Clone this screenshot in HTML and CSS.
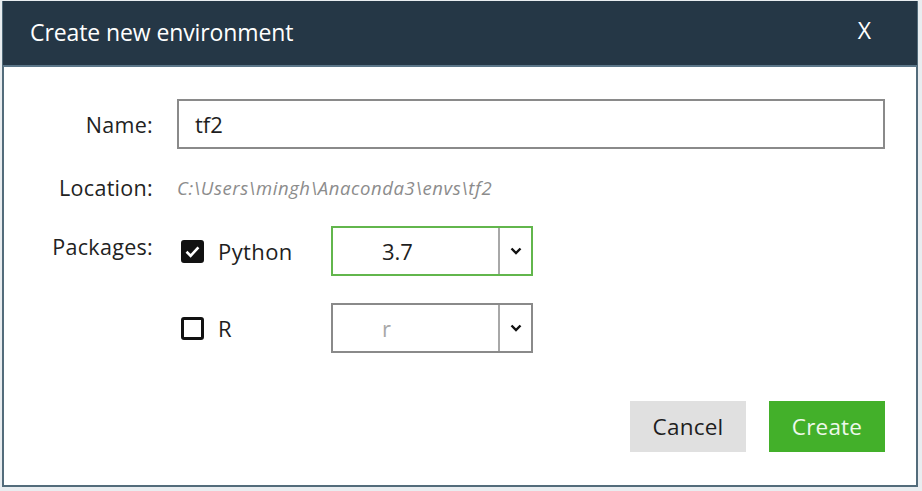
FILE: index.html
```html
<!DOCTYPE html>
<html>
<head>
<meta charset="utf-8">
<link rel="stylesheet" href="styles.css">
</head>
<body>
<div class="dialog">
  <div class="header">
    <span class="title">Create new environment</span>
    <span class="close">X</span>
  </div>
  <div class="body">
    <div class="form">
      <div class="label name-label">Name:</div>
      <div class="input">tf2</div>

      <div class="label loc-label">Location:</div>
      <div class="path">C:\Users\mingh\Anaconda3\envs\tf2</div>

      <div class="label pkg-label">Packages:</div>
      <div class="packages">
        <div class="pkg">
          <span class="check checked">
            <svg width="23" height="23" viewBox="0 0 23 23"><path d="M5.5 11.8 L9.6 15.8 L17.4 7.4" fill="none" stroke="#fff" stroke-width="2.6"/></svg>
          </span>
          <span class="pkg-name">Python</span>
          <div class="select active">
            <span class="value">3.7</span>
            <span class="arrow"><svg width="12" height="8" viewBox="0 0 12 8"><path d="M1.5 1.5 L6 6 L10.5 1.5" fill="none" stroke="#111" stroke-width="2.4"/></svg></span>
          </div>
        </div>
        <div class="pkg">
          <span class="check"></span>
          <span class="pkg-name">R</span>
          <div class="select">
            <span class="value placeholder">r</span>
            <span class="arrow"><svg width="12" height="8" viewBox="0 0 12 8"><path d="M1.5 1.5 L6 6 L10.5 1.5" fill="none" stroke="#111" stroke-width="2.4"/></svg></span>
          </div>
        </div>
      </div>
    </div>
    <div class="buttons">
      <button class="btn cancel">Cancel</button>
      <button class="btn create">Create</button>
    </div>
  </div>
</div>
</body>
</html>
```

FILE: styles.css
```css
html, body {
  margin: 0;
  padding: 0;
}
body {
  background: #e9edf0;
  width: 922px;
  height: 491px;
  overflow: hidden;
  font-family: "Open Sans", "Noto Sans", sans-serif;
  color: #1e1e1e;
}
.dialog {
  margin: 1px 0 0 2px;
  width: 912px;
  height: 484px;
  background: #fff;
  border: 2px solid #536c7b;
  border-top: none;
  display: flex;
  flex-direction: column;
}
.header {
  height: 64px;
  margin: 0 -1px 0 -1px;
  background: #253746;
  border-bottom: 2px solid #5b7689;
  display: flex;
  align-items: center;
  justify-content: space-between;
  padding: 0 46px 0 27px;
  color: #fff;
}
.title {
  font-size: 23px;
  letter-spacing: -0.1px;
  margin-top: -3px;
}
.close {
  font-size: 23px;
  margin-top: -6px;
}
.body {
  flex: 1;
  padding: 32px 31px 0 0;
  display: flex;
  flex-direction: column;
}
.form {
  display: grid;
  grid-template-columns: 149px 1fr;
  column-gap: 24px;
  row-gap: 0;
}
.label {
  text-align: right;
  font-size: 21.5px;
  letter-spacing: 0.3px;
  color: #222;
}
.name-label {
  height: 50px;
  line-height: 52px;
}
.input {
  height: 46px;
  border: 2px solid #8a8a8a;
  padding-left: 16px;
  line-height: 46px;
  font-size: 22px;
}
.loc-label, .path {
  margin-top: 24px;
  height: 30px;
  line-height: 30px;
}
.path {
  font-style: italic;
  font-size: 18.5px;
  color: #8c8c8c;
  letter-spacing: 0.6px;
}
.pkg-label {
  margin-top: 23px;
  line-height: 42px;
}
.packages {
  margin-top: 23px;
  display: flex;
  flex-direction: column;
  gap: 27px;
}
.pkg {
  display: flex;
  align-items: center;
  height: 50px;
}
.check {
  flex: none;
  width: 17px;
  height: 17px;
  margin-left: 4px;
  border: 3px solid #111;
  border-radius: 3px;
  background: #fff;
  position: relative;
}
.check.checked {
  background: #111;
}
.check svg {
  position: absolute;
  left: -3px;
  top: -3px;
}
.pkg-name {
  flex: none;
  width: 113px;
  margin-left: 14px;
  font-size: 22px;
  letter-spacing: 0.4px;
}
.select {
  flex: none;
  width: 198px;
  height: 46px;
  border: 2px solid #8a8a8a;
  display: flex;
}
.select.active {
  border-color: #62b64c;
}
.value {
  flex: 1;
  padding-left: 49px;
  line-height: 46px;
  font-size: 22px;
  color: #1e1e1e;
}
.value.placeholder {
  color: #a8a8a8;
}
.arrow {
  width: 31px;
  border-left: 2px solid #a8a8a8;
  display: flex;
  align-items: center;
  justify-content: center;
}
.buttons {
  margin-top: 48px;
  display: flex;
  justify-content: flex-end;
  gap: 23px;
}
.btn {
  width: 116px;
  height: 51px;
  border: none;
  font-family: "Open Sans", "Noto Sans", sans-serif;
  font-size: 22.5px;
  letter-spacing: 0.2px;
  padding: 0;
}
.cancel {
  background: #e0e0e0;
  color: #1e1e1e;
}
.create {
  background: #43b02a;
  color: #eef8ea;
}
```
